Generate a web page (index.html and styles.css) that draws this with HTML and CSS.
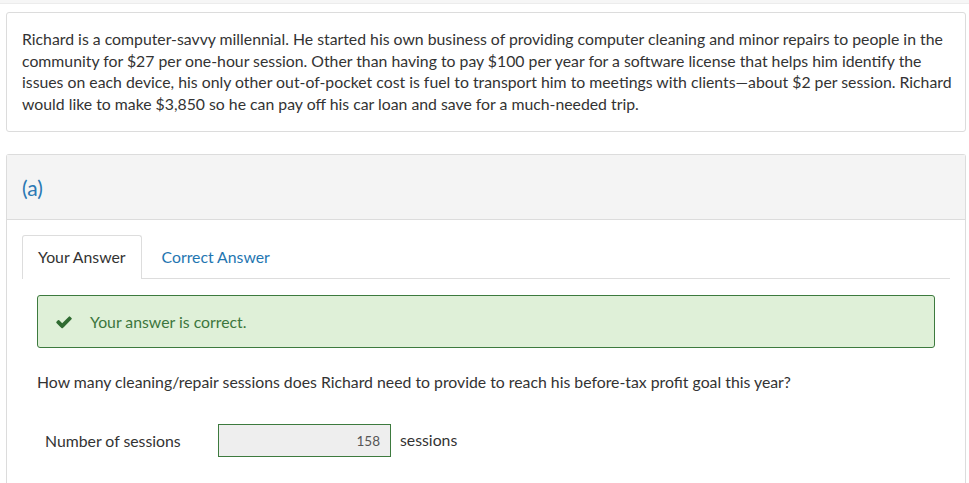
FILE: index.html
```html
<!DOCTYPE html>
<html>
<head>
<meta charset="utf-8">
<link rel="stylesheet" href="styles.css">
</head>
<body>
<div class="topbar"></div>
<div class="page">
  <div class="card intro">
    <p>Richard is a computer-savvy millennial. He started his own business of providing computer cleaning and minor repairs to people in the community for $27 per one-hour session. Other than having to pay $100 per year for a software license that helps him identify the issues on each device, his only other out-of-pocket cost is fuel to transport him to meetings with clients—about $2 per session. Richard would like to make $3,850 so he can pay off his car loan and save for a much-needed trip.</p>
  </div>
  <div class="card part">
    <div class="part-head">(a)</div>
    <div class="part-body">
      <div class="tabs">
        <div class="tab active">Your Answer</div>
        <div class="tab link">Correct Answer</div>
      </div>
      <div class="pane">
        <div class="alert">
          <svg class="check" viewBox="0 0 1792 1792" width="18" height="18"><path fill="#2f6b31" d="M1671 566q0 40-28 68l-724 724-136 136q-28 28-68 28t-68-28l-136-136-362-362q-28-28-28-68t28-68l136-136q28-28 68-28t68 28l294 295 656-657q28-28 68-28t68 28l136 136q28 28 28 68z"/></svg>
          <span>Your answer is correct.</span>
        </div>
        <p class="question">How many cleaning/repair sessions does Richard need to provide to reach his before-tax profit goal this year?</p>
        <div class="row">
          <span class="label">Number of sessions</span>
          <span class="input">158</span>
          <span class="unit">sessions</span>
        </div>
      </div>
    </div>
  </div>
</div>
</body>
</html>
```
FILE: styles.css
```css
html, body {
  margin: 0;
  padding: 0;
  background: #fff;
  font-family: Lato, "Open Sans", sans-serif;
  color: #333;
  overflow: hidden;
}
.topbar {
  height: 3px;
  background: #f6f6f6;
  border-bottom: 1px solid #ececec;
}
.page {
  padding: 8px 3px 0 6px;
  display: flex;
  flex-direction: column;
  gap: 22px;
}
.card {
  border: 1px solid #dcdcdc;
  border-radius: 3px;
  background: #fff;
}
.intro {
  padding: 15px 10px 17px 15px;
}
.intro p {
  margin: 0;
  font-size: 15.8px;
  line-height: 21.5px;
}
.part {
  border-bottom: none;
  border-radius: 3px 3px 0 0;
}
.part-head {
  background: #f4f4f4;
  border-bottom: 1px solid #dcdcdc;
  height: 64px;
  padding: 0 15px;
  display: flex;
  align-items: center;
  font-size: 21px;
  color: #2a78b3;
}
.part-body {
  padding: 15px 15px 40px 15px;
}
.tabs {
  display: flex;
  border-bottom: 1px solid #dddddd;
  height: 43px;
}
.tab {
  padding: 0 15px;
  font-size: 15.8px;
  display: flex;
  align-items: center;
  border: 1px solid transparent;
  border-bottom: none;
  border-radius: 3px 3px 0 0;
  margin-bottom: -1px;
  padding-bottom: 2px;
}
.tab.active {
  border-color: #dddddd;
  background: #fff;
  color: #333;
}
.tab.link {
  color: #1f76b1;
  padding-left: 19px;
  padding-right: 18px;
}
.pane {
  padding: 16px 15px 0 15px;
}
.alert {
  background: #dff0d8;
  border: 1px solid #3d7a3e;
  border-radius: 3px;
  height: 51px;
  display: flex;
  align-items: center;
  padding: 0 17px;
  gap: 17px;
  color: #3c763d;
  font-size: 15.8px;
}
.check {
  display: block;
}
.question {
  margin: 23px 0 0 0;
  font-size: 15.8px;
  line-height: 21px;
}
.row {
  margin-top: 32px;
  display: flex;
  align-items: center;
  padding-left: 8px;
}
.label {
  font-size: 15.8px;
  width: 173px;
}
.input {
  width: 161px;
  height: 31px;
  border: 1px solid #3d7a3e;
  background: #eeeeee;
  display: flex;
  align-items: center;
  justify-content: flex-end;
  padding-right: 10px;
  font-size: 13.5px;
  color: #555;
}
.unit {
  font-size: 15.8px;
  margin-left: 9px;
  margin-top: -3px;
}
```
